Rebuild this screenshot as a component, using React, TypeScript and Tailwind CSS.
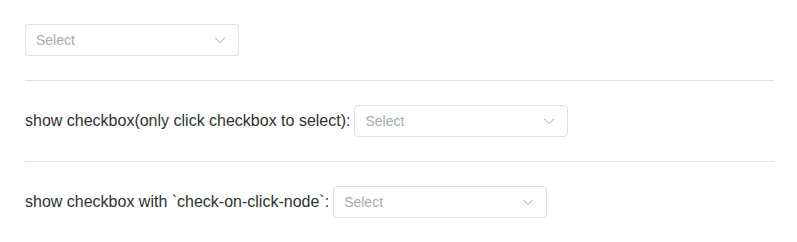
import React from 'react';

const Chevron = () => (
  <svg width="14" height="14" viewBox="0 0 1024 1024" className="text-[#a8abb2]">
    <path
      fill="currentColor"
      d="M831.872 340.864 512 652.672 192.128 340.864a30.592 30.592 0 0 0-42.752 0 29.12 29.12 0 0 0 0 41.6L489.664 714.24a32 32 0 0 0 44.672 0l340.288-331.712a29.12 29.12 0 0 0 0-41.728 30.592 30.592 0 0 0-42.752 0z"
    />
  </svg>
);

const Select = () => (
  <div className="inline-flex items-center justify-between w-[214px] h-[32px] pl-[10px] pr-[11px] border border-[#dcdfe6] rounded-[4px] bg-white align-middle">
    <span className="text-[14px] text-[#a8abb2]">Select</span>
    <Chevron />
  </div>
);

const Divider = () => <div className="h-px bg-[#dcdfe6] w-[749px] my-[24px]" />;

export default function App() {
  return (
    <div className="bg-white pl-[25px] pt-[24px] font-['Liberation_Sans',Arial,sans-serif] text-[16px] text-[#303133]">
      <div className="h-[32px] flex items-center">
        <Select />
      </div>
      <Divider />
      <div className="h-[32px] flex items-center gap-[4px]">
        <span>show checkbox(only click checkbox to select):</span>
        <Select />
      </div>
      <Divider />
      <div className="h-[32px] flex items-center gap-[4px]">
        <span>show checkbox with `check-on-click-node`:</span>
        <Select />
      </div>
    </div>
  );
}
